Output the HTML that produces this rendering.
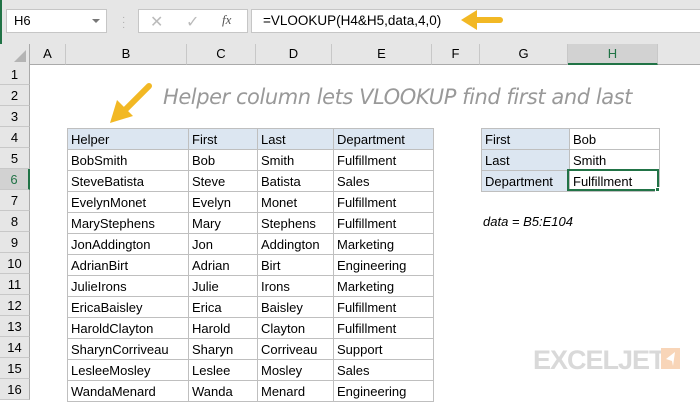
<!DOCTYPE html>
<html><head><meta charset="utf-8"><style>
*{margin:0;padding:0;box-sizing:border-box}
body{width:700px;height:400px;overflow:hidden;background:#fff;font-family:"Liberation Sans",Arial,sans-serif;position:relative;font-size:13px;color:#000}
.a{position:absolute}
.tb{left:0;top:0;width:700px;height:44px;background:#e6e6e6;border-left:2px solid #217346}
.box{background:#fff;border:1px solid #c6c6c6}
.ch{top:44px;height:21px;background:#e6e6e6;border-right:1px solid #c8c8c8;border-bottom:1px solid #aaa;text-align:center;line-height:20px;font-size:13px}
.rh{left:0;width:30px;height:21px;background:#e6e6e6;border-bottom:1px solid #c8c8c8;border-right:1px solid #aaa;text-align:center;line-height:21px;font-size:13px}
.hd{background:#dce6f1}
td{height:21px;border:1px solid #bfbfbf;padding:0 0 0 3px;line-height:19px;white-space:nowrap;overflow:hidden}
</style></head><body>
<div class="a tb"></div>
<div class="a box" style="left:6px;top:9px;width:101px;height:24px;padding:3px 7px;font-size:13px">H6</div>
<div class="a" style="left:92px;top:19px;width:0;height:0;border-left:4px solid transparent;border-right:4px solid transparent;border-top:4px solid #777"></div>
<div class="a" style="left:122px;top:15px;color:#aaa;font-size:10px;line-height:5px">·<br>·<br>·</div>
<div class="a box" style="left:138px;top:9px;width:110px;height:24px"></div>
<div class="a" style="left:150px;top:12px;color:#bbb;font-size:16px">✕</div>
<div class="a" style="left:186px;top:12px;color:#bbb;font-size:16px">✓</div>
<div class="a" style="left:222px;top:12px;color:#555;font-size:13px;font-style:italic;font-family:'Liberation Serif',serif">fx</div>
<div class="a box" style="left:251px;top:9px;width:460px;height:24px;padding:3px 11px;font-size:13.5px">=VLOOKUP(H4&amp;H5,data,4,0)</div>
<svg class="a" style="left:455px;top:8px" width="50" height="26"><path d="M45 12 H18" stroke="#f2b824" stroke-width="6" stroke-linecap="round"/><path d="M6 12 L22 2 L22 22 Z" fill="#f2b824"/></svg>

<div class="a" style="left:0;top:44px;width:30px;height:21px;background:#e6e6e6;border-right:1px solid #aaa;border-bottom:1px solid #aaa"></div>
<div class="a" style="left:14px;top:50px;width:0;height:0;border-left:12px solid transparent;border-bottom:12px solid #b4b4b4"></div>
<div class="a ch" style="left:30px;width:36px">A</div>
<div class="a ch" style="left:66px;width:121px">B</div>
<div class="a ch" style="left:187px;width:69px">C</div>
<div class="a ch" style="left:256px;width:76px">D</div>
<div class="a ch" style="left:332px;width:100px">E</div>
<div class="a ch" style="left:432px;width:48px">F</div>
<div class="a ch" style="left:480px;width:88px">G</div>
<div class="a ch" style="left:568px;width:90px;background:#d2d2d2;color:#217346;border-bottom:2px solid #217346">H</div>
<div class="a ch" style="left:658px;width:42px;border-right:none"></div>

<div class="a rh" style="top:64px">1</div><div class="a rh" style="top:85px">2</div><div class="a rh" style="top:106px">3</div><div class="a rh" style="top:127px">4</div><div class="a rh" style="top:148px">5</div><div class="a rh" style="top:169px;background:#d2d2d2;color:#217346;border-right:2px solid #217346">6</div><div class="a rh" style="top:190px">7</div><div class="a rh" style="top:211px">8</div><div class="a rh" style="top:232px">9</div><div class="a rh" style="top:253px">10</div><div class="a rh" style="top:274px">11</div><div class="a rh" style="top:295px">12</div><div class="a rh" style="top:316px">13</div><div class="a rh" style="top:337px">14</div><div class="a rh" style="top:358px">15</div><div class="a rh" style="top:379px">16</div>

<div class="a" style="left:163px;top:85px;color:#999;font-style:italic;font-size:21px;font-family:'DejaVu Sans',sans-serif;letter-spacing:-0.45px">Helper column lets VLOOKUP find first and last</div>
<svg class="a" style="left:105px;top:80px" width="50" height="50"><path d="M44 6 L20 30" stroke="#f2b824" stroke-width="6" stroke-linecap="round"/><path d="M5 43 L12 20 L28 36 Z" fill="#f2b824"/></svg>

<div class="a" style="left:67px;top:128px">
<table style="border-collapse:collapse;font-size:13px">
<colgroup><col style="width:121px"><col style="width:69px"><col style="width:76px"><col style="width:100px"></colgroup>
<tbody>
<tr class="hd"><td>Helper</td><td>First</td><td>Last</td><td>Department</td></tr>
<tr><td>BobSmith</td><td>Bob</td><td>Smith</td><td>Fulfillment</td></tr>
<tr><td>SteveBatista</td><td>Steve</td><td>Batista</td><td>Sales</td></tr>
<tr><td>EvelynMonet</td><td>Evelyn</td><td>Monet</td><td>Fulfillment</td></tr>
<tr><td>MaryStephens</td><td>Mary</td><td>Stephens</td><td>Fulfillment</td></tr>
<tr><td>JonAddington</td><td>Jon</td><td>Addington</td><td>Marketing</td></tr>
<tr><td>AdrianBirt</td><td>Adrian</td><td>Birt</td><td>Engineering</td></tr>
<tr><td>JulieIrons</td><td>Julie</td><td>Irons</td><td>Marketing</td></tr>
<tr><td>EricaBaisley</td><td>Erica</td><td>Baisley</td><td>Fulfillment</td></tr>
<tr><td>HaroldClayton</td><td>Harold</td><td>Clayton</td><td>Fulfillment</td></tr>
<tr><td>SharynCorriveau</td><td>Sharyn</td><td>Corriveau</td><td>Support</td></tr>
<tr><td>LesleeMosley</td><td>Leslee</td><td>Mosley</td><td>Sales</td></tr>
<tr><td>WandaMenard</td><td>Wanda</td><td>Menard</td><td>Engineering</td></tr>
</tbody></table></div>

<div class="a" style="left:481px;top:128px">
<table style="border-collapse:collapse;font-size:13px">
<colgroup><col style="width:88px"><col style="width:90px"></colgroup>
<tr><td class="hd">First</td><td>Bob</td></tr>
<tr><td class="hd">Last</td><td>Smith</td></tr>
<tr><td class="hd">Department</td><td>Fulfillment</td></tr>
</table></div>
<div class="a" style="left:567px;top:169px;width:92px;height:22px;border:2px solid #217346"></div>
<div class="a" style="left:655px;top:187px;width:5px;height:5px;background:#217346;border:1px solid #fff"></div>
<div class="a" style="left:483px;top:214px;font-style:italic;font-size:13px">data = B5:E104</div>

<div class="a" style="left:533px;top:345px;font-size:27px;font-weight:bold;color:#d9d9d9;letter-spacing:-1px;font-family:'Liberation Sans',sans-serif">EXCELJET</div>
<div class="a" style="left:661px;top:348px;width:19px;height:21px;background:#f8d5b8"></div>
<svg class="a" style="left:661px;top:348px" width="19" height="21"><path d="M14 4 L5 11 L11 13 Z M11 13 L12 18 L14 4" fill="#fff"/></svg>
</body></html>
